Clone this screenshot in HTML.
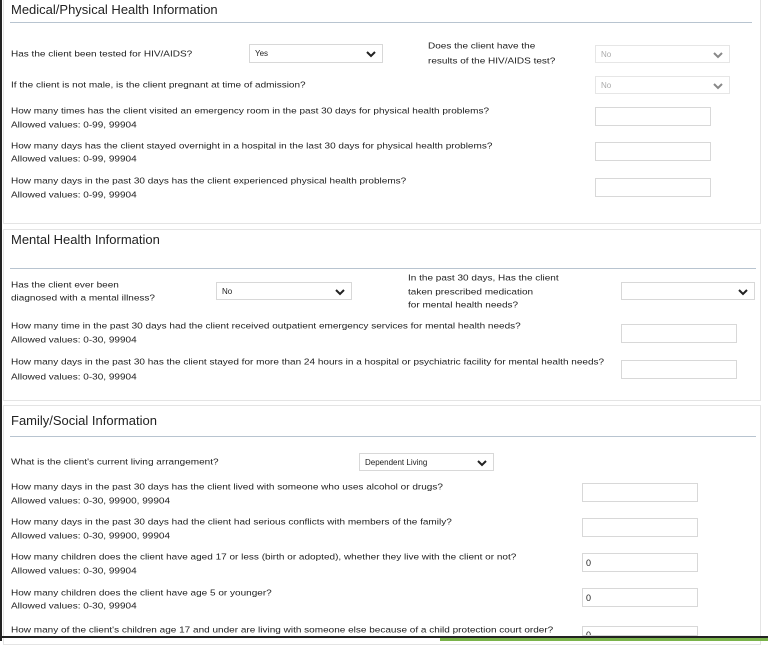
<!DOCTYPE html>
<html><head><meta charset="utf-8"><style>
*{margin:0;padding:0;box-sizing:border-box}
body{width:768px;height:641px;overflow:hidden;background:#fff;font-family:"Liberation Sans",sans-serif;color:#222;position:relative}
.a{position:absolute;white-space:nowrap;font-size:10px;line-height:11px;transform:scaleY(0.85);transform-origin:0 50%}
.h{position:absolute;font-size:13px;color:#222;white-space:nowrap}
.line{position:absolute;height:1px;background:#6d8299;border-bottom:1px solid #b8c4d0}
.panel{position:absolute;border:1px solid #e4e4e4;background:#fff}
.sel{position:absolute;border:1px solid #d8d8d8;background:#fff;font-size:8px;padding:4px 0 0 5px;color:#222}
.sel.d{color:#aaa;border-color:#e6e6e6}
.sel svg{position:absolute;right:6px;top:5px}
.inp{position:absolute;border:1px solid #d8d8d8;background:#fff;font-size:9px;padding:4px 0 0 3px}
</style></head><body>
<div style="position:absolute;left:0;top:0;width:2px;height:641px;background:#222"></div>
<div class="panel" style="left:3px;top:-2px;width:758px;height:226px"></div>
<div class="panel" style="left:3px;top:229px;width:758px;height:172px"></div>
<div class="panel" style="left:3px;top:405px;width:758px;height:240px"></div>
<div style="position:absolute;left:0;top:636px;width:768px;height:2px;background:#222"></div>
<div style="position:absolute;left:440px;top:638px;width:328px;height:3px;background:#7ab34a"></div>

<div class="h" style="left:11px;top:2px">Medical/Physical Health Information</div>
<div class="line" style="left:10px;top:22px;width:742px"></div>
<div class="a" style="left:11px;top:49px">Has the client been tested for HIV/AIDS?</div>
<div class="sel" style="left:249px;top:44px;width:134px;height:19px">Yes<svg width="10" height="8" viewBox="0 0 10 8"><polyline points="1,2 5,6 9,2" fill="none" stroke="#222" stroke-width="2"/></svg></div>
<div class="a" style="left:428px;top:41px">Does the client have the</div>
<div class="a" style="left:428px;top:56px">results of the HIV/AIDS test?</div>
<div class="sel d" style="left:595px;top:45px;width:135px;height:18px">No<svg width="10" height="8" viewBox="0 0 10 8"><polyline points="1,2 5,6 9,2" fill="none" stroke="#888" stroke-width="2"/></svg></div>
<div class="a" style="left:11px;top:80px">If the client is not male, is the client pregnant at time of admission?</div>
<div class="sel d" style="left:595px;top:76px;width:135px;height:18px">No<svg width="10" height="8" viewBox="0 0 10 8"><polyline points="1,2 5,6 9,2" fill="none" stroke="#888" stroke-width="2"/></svg></div>
<div class="a" style="left:11px;top:106px">How many times has the client visited an emergency room in the past 30 days for physical health problems?</div>
<div class="a" style="left:11px;top:120px">Allowed values: 0-99, 99904</div>
<div class="inp" style="left:595px;top:107px;width:116px;height:19px"></div>
<div class="a" style="left:11px;top:141px">How many days has the client stayed overnight in a hospital in the last 30 days for physical health problems?</div>
<div class="a" style="left:11px;top:154px">Allowed values: 0-99, 99904</div>
<div class="inp" style="left:595px;top:142px;width:116px;height:19px"></div>
<div class="a" style="left:11px;top:176px">How many days in the past 30 days has the client experienced physical health problems?</div>
<div class="a" style="left:11px;top:190px">Allowed values: 0-99, 99904</div>
<div class="inp" style="left:595px;top:178px;width:116px;height:19px"></div>

<div class="h" style="left:11px;top:232px">Mental Health Information</div>
<div class="line" style="left:10px;top:268px;width:746px"></div>
<div class="a" style="left:11px;top:280px">Has the client ever been</div>
<div class="a" style="left:11px;top:293px">diagnosed with a mental illness?</div>
<div class="sel" style="left:216px;top:282px;width:136px;height:18px">No<svg width="10" height="8" viewBox="0 0 10 8"><polyline points="1,2 5,6 9,2" fill="none" stroke="#222" stroke-width="2"/></svg></div>
<div class="a" style="left:408px;top:273px">In the past 30 days, Has the client</div>
<div class="a" style="left:408px;top:287px">taken prescribed medication</div>
<div class="a" style="left:408px;top:300px">for mental health needs?</div>
<div class="sel" style="left:621px;top:282px;width:134px;height:18px"><svg width="10" height="8" viewBox="0 0 10 8"><polyline points="1,2 5,6 9,2" fill="none" stroke="#222" stroke-width="2"/></svg></div>
<div class="a" style="left:11px;top:321px">How many time in the past 30 days had the client received outpatient emergency services for mental health needs?</div>
<div class="a" style="left:11px;top:335px">Allowed values: 0-30, 99904</div>
<div class="inp" style="left:621px;top:324px;width:116px;height:19px"></div>
<div class="a" style="left:11px;top:357px">How many days in the past 30 has the client stayed for more than 24 hours in a hospital or psychiatric facility for mental health needs?</div>
<div class="a" style="left:11px;top:372px">Allowed values: 0-30, 99904</div>
<div class="inp" style="left:621px;top:360px;width:116px;height:19px"></div>

<div class="h" style="left:11px;top:413px">Family/Social Information</div>
<div class="line" style="left:10px;top:436px;width:746px"></div>
<div class="a" style="left:11px;top:457px">What is the client's current living arrangement?</div>
<div class="sel" style="left:359px;top:453px;width:135px;height:18px">Dependent Living<svg width="10" height="8" viewBox="0 0 10 8"><polyline points="1,2 5,6 9,2" fill="none" stroke="#222" stroke-width="2"/></svg></div>
<div class="a" style="left:11px;top:482px">How many days in the past 30 days has the client lived with someone who uses alcohol or drugs?</div>
<div class="a" style="left:11px;top:496px">Allowed values: 0-30, 99900, 99904</div>
<div class="inp" style="left:582px;top:483px;width:116px;height:19px"></div>
<div class="a" style="left:11px;top:517px">How many days in the past 30 days had the client had serious conflicts with members of the family?</div>
<div class="a" style="left:11px;top:531px">Allowed values: 0-30, 99900, 99904</div>
<div class="inp" style="left:582px;top:518px;width:116px;height:19px"></div>
<div class="a" style="left:11px;top:552px">How many children does the client have aged 17 or less (birth or adopted), whether they live with the client or not?</div>
<div class="a" style="left:11px;top:566px">Allowed values: 0-30, 99904</div>
<div class="inp" style="left:582px;top:553px;width:116px;height:19px">0</div>
<div class="a" style="left:11px;top:588px">How many children does the client have age 5 or younger?</div>
<div class="a" style="left:11px;top:601px">Allowed values: 0-30, 99904</div>
<div class="inp" style="left:582px;top:588px;width:116px;height:19px">0</div>
<div class="a" style="left:11px;top:625px">How many of the client's children age 17 and under are living with someone else because of a child protection court order?</div>
<div class="inp" style="left:582px;top:626px;width:116px;height:10px;padding-top:3px;overflow:hidden">0</div>
</body></html>
